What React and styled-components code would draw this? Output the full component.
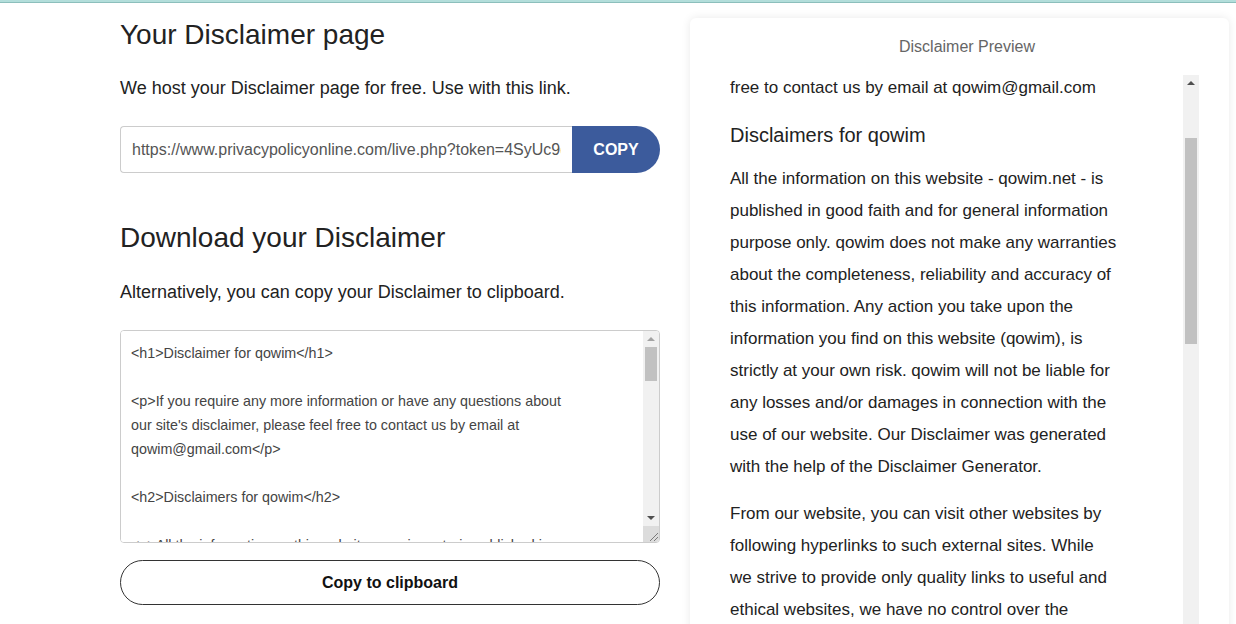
import React, { useLayoutEffect, useRef } from "react";
import styled, { createGlobalStyle } from "styled-components";

const Global = createGlobalStyle`
  html, body { margin: 0; padding: 0; background: #fff; }
  body { font-family: "Liberation Sans", Arial, sans-serif; color: #222; overflow: hidden; }
  * { box-sizing: border-box; }
`;

/* ---------- scrollbar drawing ---------- */
const ScrollBar = styled.div`
  width: 16px;
  flex: 0 0 16px;
  display: flex;
  flex-direction: column;
  background: #f1f1f1;
`;

const ArrowButton = styled.div`
  height: 16px;
  flex: 0 0 16px;
  display: flex;
  align-items: center;
  justify-content: center;
  &::before {
    content: "";
    width: 0;
    height: 0;
    border-left: 4px solid transparent;
    border-right: 4px solid transparent;
    ${(p) =>
      p.$down
        ? `border-top: 4px solid ${p.$dim ? "#a3a3a3" : "#505050"};`
        : `border-bottom: 4px solid ${p.$dim ? "#a3a3a3" : "#505050"};`}
  }
`;

const TrackGap = styled.div`
  flex: ${(p) => (p.$fill ? "1 1 auto" : `0 0 ${p.$size}px`)};
`;

const Thumb = styled.div`
  flex: 0 0 ${(p) => p.$size}px;
  margin: 0 2px;
  background: #c1c1c1;
`;

const ResizeCorner = styled.div`
  height: 16px;
  flex: 0 0 16px;
  background: #dcdcdc;
  display: flex;
  align-items: flex-end;
  justify-content: flex-end;
`;

/* ---------- page ---------- */
const TopBand = styled.div`
  height: 3px;
  background: #b3dedb;
  border-bottom: 1px solid #8cbfbc;
`;

const Page = styled.div`
  display: grid;
  grid-template-columns: 540px 539px;
  column-gap: 30px;
  padding: 15px 0 0 120px;
  align-items: start;
`;

const Column = styled.div`
  display: flex;
  flex-direction: column;
`;

const Heading = styled.h2`
  margin: ${(p) => p.$top || 0}px 0 0;
  font-size: 28px;
  line-height: 32px;
  font-weight: 400;
  color: #222;
`;

const Lead = styled.p`
  margin: ${(p) => p.$top || 0}px 0 0;
  font-size: 18px;
  line-height: 24px;
  color: #222;
`;

const LinkRow = styled.div`
  display: flex;
  margin-top: 26px;
  height: 47px;
`;

const LinkInput = styled.input`
  flex: 1;
  min-width: 0;
  height: 47px;
  border: 1px solid #ccc;
  border-right: none;
  border-radius: 4px 0 0 4px;
  padding: 0 11px;
  font-family: "Liberation Sans", Arial, sans-serif;
  font-size: 16px;
  color: #555;
  outline: none;
  background: #fff;
`;

const CopyButton = styled.button`
  width: 88px;
  height: 47px;
  border: none;
  border-radius: 0 24px 24px 0;
  background: #3c5b9c;
  color: #fff;
  font-family: "Liberation Sans", Arial, sans-serif;
  font-weight: 700;
  font-size: 16px;
  padding: 0;
  cursor: pointer;
`;

const CodeBox = styled.div`
  margin-top: 26px;
  height: 213px;
  display: flex;
  border: 1px solid #ccc;
  border-radius: 4px;
  overflow: hidden;
`;

const CodeArea = styled.textarea`
  flex: 1;
  min-width: 0;
  height: 100%;
  border: none;
  padding: 10px 10px;
  font-family: "Liberation Sans", Arial, sans-serif;
  font-size: 14.3px;
  line-height: 24px;
  color: #444;
  outline: none;
  resize: none;
  overflow: hidden;
  background: #fff;
  white-space: pre;
`;

const ClipButton = styled.button`
  margin-top: 17px;
  height: 45px;
  width: 100%;
  border: 1px solid #333;
  border-radius: 23px;
  background: #fff;
  color: #111;
  font-family: "Liberation Sans", Arial, sans-serif;
  font-weight: 700;
  font-size: 16px;
  cursor: pointer;
`;

const Card = styled.div`
  background: #fff;
  border-radius: 6px;
  box-shadow: 0 0 10px rgba(0, 0, 0, 0.09);
  padding-top: 19px;
  height: 680px;
`;

const CardTitle = styled.div`
  text-align: center;
  padding-left: 15px;
  font-size: 16px;
  line-height: 20px;
  color: #666;
`;

const PreviewArea = styled.div`
  margin-top: 18px;
  width: 509px;
  height: 600px;
  display: flex;
`;

const PreviewContent = styled.div`
  flex: 1;
  min-width: 0;
  overflow: hidden;
  padding: 22px 30px 0 40px;
  color: #222;
`;

const PTitle = styled.h1`
  margin: 0 0 15px;
  font-size: 26px;
  line-height: 32px;
  font-weight: 400;
`;

const PSub = styled.h2`
  margin: 1px 0 12px;
  font-size: 20px;
  line-height: 32px;
  font-weight: 400;
`;

const PText = styled.p`
  margin: 0 0 15px;
  font-size: 17px;
  line-height: 32px;
  white-space: nowrap;
`;

const codeText = `<h1>Disclaimer for qowim</h1>

<p>If you require any more information or have any questions about
our site's disclaimer, please feel free to contact us by email at
qowim@gmail.com</p>

<h2>Disclaimers for qowim</h2>

<p>All the information on this website - qowim.net - is published in
good faith and for general information purpose only. qowim does not
make any warranties about the completeness, reliability and accuracy
of this information.</p>`;

function Lines({ lines }) {
  return lines.map((l, i) => (
    <React.Fragment key={i}>
      {l}
      {i < lines.length - 1 && <br />}
    </React.Fragment>
  ));
}

const p1 = [
  "If you require any more information or have any",
  "questions about our site's disclaimer, please feel",
  "free to contact us by email at qowim@gmail.com",
];

const p2 = [
  "All the information on this website - qowim.net - is",
  "published in good faith and for general information",
  "purpose only. qowim does not make any warranties",
  "about the completeness, reliability and accuracy of",
  "this information. Any action you take upon the",
  "information you find on this website (qowim), is",
  "strictly at your own risk. qowim will not be liable for",
  "any losses and/or damages in connection with the",
  "use of our website. Our Disclaimer was generated",
  "with the help of the Disclaimer Generator.",
];

const p3 = [
  "From our website, you can visit other websites by",
  "following hyperlinks to such external sites. While",
  "we strive to provide only quality links to useful and",
  "ethical websites, we have no control over the",
  "content and nature of these sites. These links to",
  "other websites do not imply a recommendation for",
  "all the content found on these sites.",
];

export default function App() {
  const scrollRef = useRef(null);
  const firstPara = useRef(null);

  useLayoutEffect(() => {
    if (scrollRef.current && firstPara.current) {
      const el = scrollRef.current;
      el.scrollTop = firstPara.current.offsetTop - el.offsetTop + 64 + 3;
    }
  }, []);

  return (
    <>
      <Global />
      <TopBand />
      <Page>
        <Column>
          <Heading $top={1}>Your Disclaimer page</Heading>
          <Lead $top={25}>We host your Disclaimer page for free. Use with this link.</Lead>
          <LinkRow>
            <LinkInput
              readOnly
              value="https://www.privacypolicyonline.com/live.php?token=4SyUc9qWmKvL2xYz"
            />
            <CopyButton>COPY</CopyButton>
          </LinkRow>
          <Heading $top={49}>Download your Disclaimer</Heading>
          <Lead $top={26}>Alternatively, you can copy your Disclaimer to clipboard.</Lead>
          <CodeBox>
            <CodeArea readOnly value={codeText} />
            <ScrollBar>
              <ArrowButton $dim />
              <Thumb $size={34} />
              <TrackGap $fill />
              <ArrowButton $down />
              <ResizeCorner>
                <svg width="14" height="14" viewBox="0 0 14 14">
                  <path d="M13 5 L5 13 M13 9 L9 13" stroke="#7a7a7a" strokeWidth="1" fill="none" />
                </svg>
              </ResizeCorner>
            </ScrollBar>
          </CodeBox>
          <ClipButton>Copy to clipboard</ClipButton>
        </Column>
        <Card>
          <CardTitle>Disclaimer Preview</CardTitle>
          <PreviewArea>
            <PreviewContent ref={scrollRef}>
              <PTitle>Disclaimer for qowim</PTitle>
              <PText ref={firstPara}>
                <Lines lines={p1} />
              </PText>
              <PSub>Disclaimers for qowim</PSub>
              <PText>
                <Lines lines={p2} />
              </PText>
              <PText>
                <Lines lines={p3} />
              </PText>
            </PreviewContent>
            <ScrollBar>
              <ArrowButton />
              <TrackGap $size={47} />
              <Thumb $size={206} />
              <TrackGap $fill />
            </ScrollBar>
          </PreviewArea>
        </Card>
      </Page>
    </>
  );
}
